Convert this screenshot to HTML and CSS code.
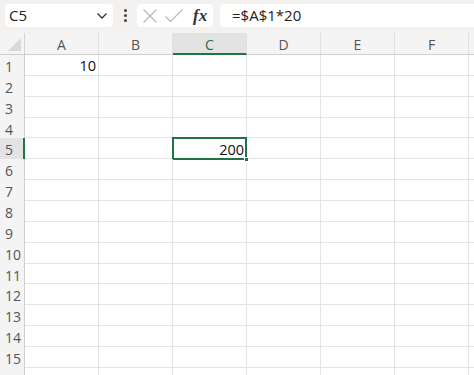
FILE: index.html
```html
<!DOCTYPE html>
<html>
<head>
<meta charset="utf-8">
<link rel="stylesheet" href="styles.css">
</head>
<body>
<div class="app">
  <div class="toolbar">
    <div class="namebox">
      <span class="name">C5</span>
      <svg class="chev" width="12" height="8" viewBox="0 0 12 8"><path d="M1.5 1.5 L6 6 L10.5 1.5" fill="none" stroke="#333" stroke-width="1.3"/></svg>
    </div>
    <div class="dots"><span></span><span></span><span></span></div>
    <div class="fxbox">
      <svg class="ico" width="16" height="16" viewBox="0 0 16 16"><path d="M1.5 1.5 L14.5 14.5 M14.5 1.5 L1.5 14.5" stroke="#b5b5b5" stroke-width="1.1" fill="none"/></svg>
      <svg class="ico" width="20" height="16" viewBox="0 0 20 16"><path d="M1.5 8.5 L6.5 13.5 L18.5 1.5" stroke="#b5b5b5" stroke-width="1.1" fill="none"/></svg>
      <span class="fx">fx</span>
    </div>
    <div class="formula">=$A$1*20</div>
  </div>
  <div class="sheet">
    <div class="corner"><span class="tri"></span></div>
    <div class="ch">A</div><div class="ch">B</div><div class="ch sel">C</div><div class="ch">D</div><div class="ch">E</div><div class="ch">F</div><div class="ch last"></div>

    <div class="rh">1</div><div class="c num">10</div><div class="c"></div><div class="c"></div><div class="c"></div><div class="c"></div><div class="c"></div><div class="c"></div>
    <div class="rh">2</div><div class="c"></div><div class="c"></div><div class="c"></div><div class="c"></div><div class="c"></div><div class="c"></div><div class="c"></div>
    <div class="rh">3</div><div class="c"></div><div class="c"></div><div class="c"></div><div class="c"></div><div class="c"></div><div class="c"></div><div class="c"></div>
    <div class="rh">4</div><div class="c"></div><div class="c"></div><div class="c"></div><div class="c"></div><div class="c"></div><div class="c"></div><div class="c"></div>
    <div class="rh sel">5</div><div class="c"></div><div class="c"></div><div class="c num active">200<span class="handle"></span></div><div class="c"></div><div class="c"></div><div class="c"></div><div class="c"></div>
    <div class="rh">6</div><div class="c"></div><div class="c"></div><div class="c"></div><div class="c"></div><div class="c"></div><div class="c"></div><div class="c"></div>
    <div class="rh">7</div><div class="c"></div><div class="c"></div><div class="c"></div><div class="c"></div><div class="c"></div><div class="c"></div><div class="c"></div>
    <div class="rh">8</div><div class="c"></div><div class="c"></div><div class="c"></div><div class="c"></div><div class="c"></div><div class="c"></div><div class="c"></div>
    <div class="rh">9</div><div class="c"></div><div class="c"></div><div class="c"></div><div class="c"></div><div class="c"></div><div class="c"></div><div class="c"></div>
    <div class="rh">10</div><div class="c"></div><div class="c"></div><div class="c"></div><div class="c"></div><div class="c"></div><div class="c"></div><div class="c"></div>
    <div class="rh">11</div><div class="c"></div><div class="c"></div><div class="c"></div><div class="c"></div><div class="c"></div><div class="c"></div><div class="c"></div>
    <div class="rh">12</div><div class="c"></div><div class="c"></div><div class="c"></div><div class="c"></div><div class="c"></div><div class="c"></div><div class="c"></div>
    <div class="rh">13</div><div class="c"></div><div class="c"></div><div class="c"></div><div class="c"></div><div class="c"></div><div class="c"></div><div class="c"></div>
    <div class="rh">14</div><div class="c"></div><div class="c"></div><div class="c"></div><div class="c"></div><div class="c"></div><div class="c"></div><div class="c"></div>
    <div class="rh">15</div><div class="c"></div><div class="c"></div><div class="c"></div><div class="c"></div><div class="c"></div><div class="c"></div><div class="c"></div>
    <div class="rh"></div><div class="c"></div><div class="c"></div><div class="c"></div><div class="c"></div><div class="c"></div><div class="c"></div><div class="c"></div>
  </div>
</div>
</body>
</html>
```
FILE: styles.css
```css
* { box-sizing: border-box; }
html, body { margin: 0; padding: 0; background: #fff; }
body { font-family: "Open Sans", "Noto Sans", sans-serif; overflow: hidden; }
.app { width: 474px; height: 375px; overflow: hidden; }

.toolbar {
  height: 33px;
  background: #f4f2f1;
  display: flex;
  align-items: flex-start;
  padding-top: 4px;
  padding-left: 5px;
}
.namebox {
  width: 108px; height: 23px;
  background: #fff;
  border-radius: 4px;
  display: flex; align-items: center; justify-content: space-between;
  padding: 0 5px 0 4px;
}
.name { font-size: 15px; color: #222; line-height: 1; }
.chev { margin-top: 1px; }
.dots {
  width: 24px; height: 23px;
  display: flex; flex-direction: column; align-items: center; justify-content: center; gap: 2px;
}
.dots span { width: 3px; height: 3px; border-radius: 50%; background: #444; }
.fxbox {
  width: 76px; height: 23px;
  background: #fff; border-radius: 4px;
  display: flex; align-items: center;
  padding-left: 5px;
  gap: 6px;
}
.fx {
  font-family: "Liberation Serif", "DejaVu Serif", serif;
  font-style: italic; font-weight: bold;
  font-size: 17px; color: #333;
  margin-left: 3px; line-height: 1;
}
.formula {
  margin-left: 7px;
  flex: 1; height: 23px;
  background: #fff;
  border-radius: 4px 0 0 4px;
  font-size: 15px; color: #222;
  padding-left: 12px;
  line-height: 23px;
}

.sheet {
  display: grid;
  grid-template-columns: 25px repeat(6, 74px) 30px;
  grid-template-rows: 22px repeat(16, 20.87px);
}
.corner {
  background: #f4f4f4;
  border-right: 1px solid #d4d4d4;
  border-bottom: 1px solid #cfcfcf;
  position: relative;
}
.tri {
  position: absolute; right: 3px; bottom: 3px;
  width: 0; height: 0;
  border-left: 13px solid transparent;
  border-bottom: 13px solid #d9d9d9;
}
.ch {
  background: #f4f4f4;
  border-right: 1px solid #e0e0e0;
  border-bottom: 1px solid #cfcfcf;
  font-size: 14px; color: #555;
  display: flex; align-items: center; justify-content: center;
  padding-top: 2px;
}
.ch.sel {
  background: #e3e3e3;
  border-bottom: 2px solid #217346;
  color: #217346;
}
.rh {
  background: #f4f4f4;
  border-right: 1px solid #cfcfcf;
  font-size: 14px; color: #555;
  display: flex; align-items: center; justify-content: flex-start;
  padding-left: 5px; padding-top: 2px;
}
.rh.sel {
  background: #e3e3e3;
  border-right: 2px solid #217346;
}
.c {
  border-right: 1px solid #e4e4e4;
  border-bottom: 1px solid #e4e4e4;
  font-size: 14.5px; color: #111;
  display: flex; align-items: center;
  padding-top: 2px;
  position: relative;
}
.c.num { justify-content: flex-end; padding-right: 2px; }
.c.active::after {
  content: "";
  position: absolute; left: -1px; top: -1px; right: -1px; bottom: -2px;
  border: 2px solid #217346;
}
.handle {
  position: absolute; right: -3px; bottom: -4px;
  width: 5px; height: 5px;
  background: #217346; border: 1px solid #fff;
  z-index: 2;
}
```
